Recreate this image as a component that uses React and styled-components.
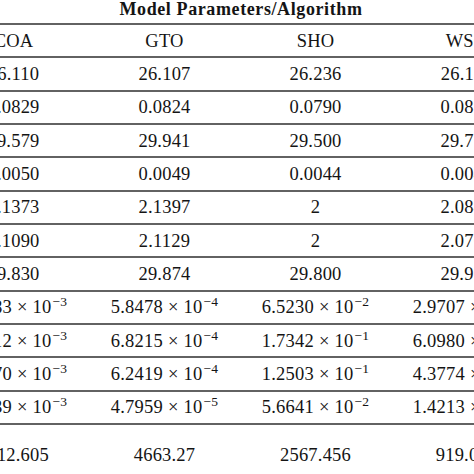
import React from 'react';
import styled, { createGlobalStyle } from 'styled-components';

const GlobalStyle = createGlobalStyle`
  html, body {
    margin: 0;
    padding: 0;
    background: #ffffff;
    overflow: hidden;
  }
`;

const Page = styled.div`
  width: 474px;
  height: 474px;
  overflow: hidden;
  background: #fff;
  font-family: 'Liberation Serif', 'Times New Roman', serif;
  color: #141414;
`;

const Table = styled.div`
  margin-left: -62px;
  width: 604px;
`;

const Row = styled.div`
  box-sizing: border-box;
  display: grid;
  grid-template-columns: repeat(4, 151px);
  align-items: center;
  height: ${(p) => p.height}px;
  border-bottom: ${(p) => (p.ruled ? '2px solid #626262' : 'none')};
  padding-top: ${(p) => p.padTop || 0}px;
`;

const Caption = styled.div`
  grid-column: 1 / span 4;
  align-self: start;
  text-align: center;
  font-size: 18px;
  font-weight: bold;
  letter-spacing: 0.6px;
  line-height: 18px;
  padding-left: 2px;
`;

const Cell = styled.div`
  text-align: center;
  font-size: 18.5px;
  letter-spacing: 0.2px;
  line-height: 20px;
  white-space: nowrap;
`;

const Times = styled.span`
  margin: 0 5px;
`;

const Exp = styled.sup`
  font-size: 13.5px;
  vertical-align: 7px;
  line-height: 0;
  margin-left: 1px;
`;

const Sci = ({ m, e }) => (
  <>
    {m}
    <Times>×</Times>10<Exp>−{e}</Exp>
  </>
);

const algorithms = ['COA', 'GTO', 'SHO', 'WSO'];

const rows = [
  ['26.110', '26.107', '26.236', '26.112'],
  ['0.0829', '0.0824', '0.0790', '0.0827'],
  ['29.579', '29.941', '29.500', '29.712'],
  ['0.0050', '0.0049', '0.0044', '0.0048'],
  ['2.1373', '2.1397', '2', '2.0841'],
  ['2.1090', '2.1129', '2', '2.0765'],
  ['29.830', '29.874', '29.800', '29.915'],
  [['1.2483', 3], ['5.8478', 4], ['6.5230', 2], ['2.9707', 4]],
  [['2.0512', 3], ['6.8215', 4], ['1.7342', 1], ['6.0980', 4]],
  [['3.4170', 3], ['6.2419', 4], ['1.2503', 1], ['4.3774', 4]],
  [['1.7839', 3], ['4.7959', 5], ['5.6641', 2], ['1.4213', 4]],
];

const totals = ['4412.605', '4663.27', '2567.456', '919.045'];

export default function App() {
  return (
    <Page>
      <GlobalStyle />
      <Table>
        <Row height={25} ruled>
          <Caption>Model Parameters/Algorithm</Caption>
        </Row>
        <Row height={33.33} ruled>
          {algorithms.map((a) => (
            <Cell key={a}>{a}</Cell>
          ))}
        </Row>
        {rows.map((r, i) => (
          <Row key={i} height={33.33} ruled>
            {r.map((v, j) => (
              <Cell key={j}>
                {Array.isArray(v) ? <Sci m={v[0]} e={v[1]} /> : v}
              </Cell>
            ))}
          </Row>
        ))}
        <Row height={56} padTop={4}>
          {totals.map((t) => (
            <Cell key={t}>{t}</Cell>
          ))}
        </Row>
      </Table>
    </Page>
  );
}
